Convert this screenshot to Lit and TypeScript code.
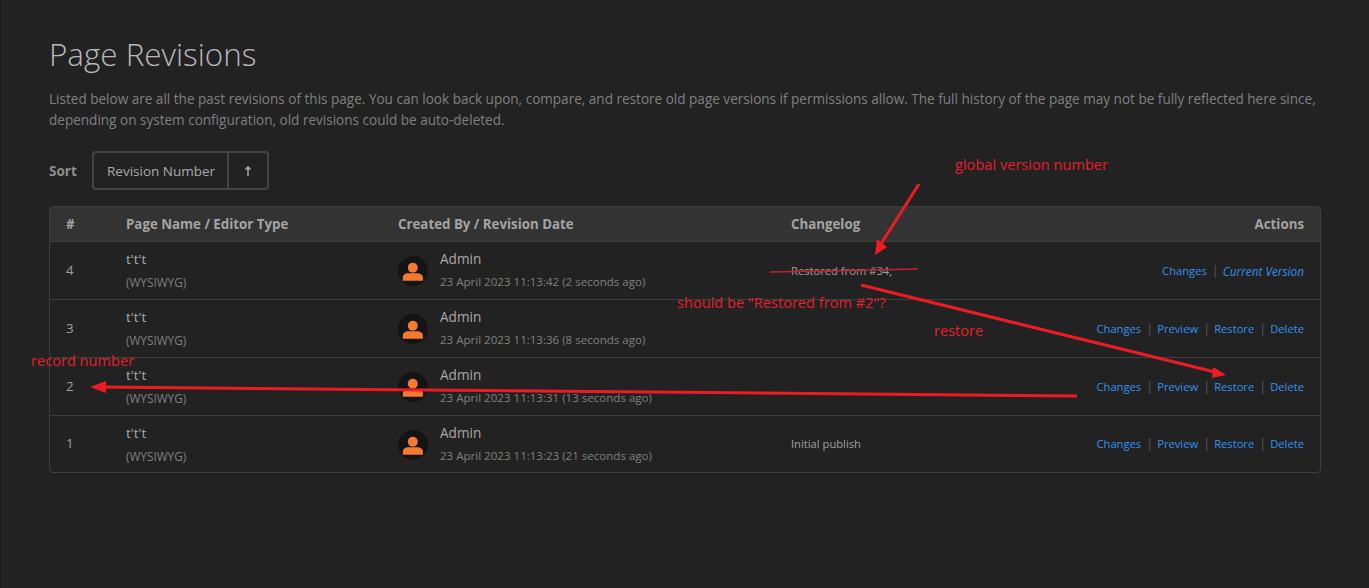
import { LitElement, html, css, svg } from "lit";
import { customElement } from "lit/decorators.js";

type Row = { n: number; date: string; log: string; current?: boolean };
const rows: Row[] = [
  { n: 4, date: "23 April 2023 11:13:42 (2 seconds ago)", log: "Restored from #34;", current: true },
  { n: 3, date: "23 April 2023 11:13:36 (8 seconds ago)", log: "" },
  { n: 2, date: "23 April 2023 11:13:31 (13 seconds ago)", log: "" },
  { n: 1, date: "23 April 2023 11:13:23 (21 seconds ago)", log: "Initial publish" },
];

@customElement("app-root")
export class AppRoot extends LitElement {
  static styles = css`
    :host {
      display: block;
      position: relative;
      width: 1369px;
      height: 588px;
      overflow: hidden;
      box-sizing: border-box;
      background: #222222;
      border-left: 1px solid #1a1a1a;
      font-family: "Open Sans", "Noto Sans", sans-serif;
      color: #a9a9a9;
    }
    .page { padding: 35px 48px 0 48px; }
    h1 {
      margin: 0;
      font-size: 31.4px;
      font-weight: 300;
      line-height: 38px;
      color: #b8b8b8;
    }
    .desc {
      margin: 16px 0 0;
      font-size: 13.55px;
      line-height: 21px;
      color: #808080;
      white-space: nowrap;
    }
    .sort { display: flex; align-items: center; margin-top: 20px; gap: 15px; }
    .sort-label { font-size: 13.5px; font-weight: 700; color: #8e8e8e; width: 28px; }
    .sort-group {
      display: flex;
      height: 39px;
      box-sizing: border-box;
      border: 2px solid #444444;
      border-radius: 4px;
      font-size: 13.5px;
      color: #a9a9a9;
    }
    .sort-field { display: flex; align-items: center; padding: 0 0 0 13px; width: 133px; box-sizing: border-box; white-space: nowrap; }
    .sort-dir {
      display: flex;
      align-items: center;
      justify-content: center;
      width: 40px;
      box-sizing: border-box;
      border-left: 2px solid #444444;
    }
    .table {
      margin-top: 16px;
      width: 1272px;
      box-sizing: border-box;
      border: 1px solid #3e3e3e;
      border-radius: 4px;
      overflow: hidden;
      font-size: 13.3px;
    }
    .row {
      display: grid;
      grid-template-columns: 60px 272px 393px 1fr;
      align-items: center;
      height: 58px;
      box-sizing: border-box;
      border-top: 1px solid #3e3e3e;
      padding: 0 16px;
    }
    .row.head {
      height: 34px;
      border-top: 0;
      background: #333333;
      font-weight: 700;
      color: #a4a4a4;
    }
    .row.last { height: 57px; }
    .last .name, .last .user { padding-top: 1px; }
    .last .log { margin-bottom: 2px; }
    .num { font-size: 13.3px; color: #a0a0a0; margin-bottom: 2px; }
    .title { display: block; font-size: 13.5px; color: #a9a9a9; line-height: 20px; }
    .sub { font-size: 11.8px; color: #808080; line-height: 22px; margin-top: 2px; display: block; }
    .user { display: flex; align-items: center; gap: 12px; }
    .avatar { width: 30px; height: 30px; flex: none; display: block; }
    .who { font-size: 13.6px; color: #a9a9a9; line-height: 20px; }
    .when { font-size: 11.55px; color: #808080; line-height: 22px; margin-top: 2px; white-space: nowrap; display: block; }
    .log { font-size: 11.2px; color: #a0a0a0; display: flex; justify-content: space-between; align-items: center; white-space: nowrap; }
    .log.th { font-size: 13.3px; color: #a4a4a4; }
    .actions { display: flex; align-items: center; gap: 5px; font-size: 11.2px; color: #3391f0; }
    .sep { color: #5a5a5a; font-size: 12.5px; width: 6px; text-align: center; }
    .cur { font-style: italic; font-size: 11.8px; }
    .overlay { position: absolute; left: -1px; top: 0; pointer-events: none; }
    .note { position: absolute; font-family: "Open Sans", sans-serif; font-size: 14.6px; color: #e4202c; white-space: nowrap; line-height: 18px; }
    .n1 { left: 954px; top: 155px; }
    .n2 { left: 676px; top: 293px; }
    .n3 { left: 933px; top: 321px; }
    .n4 { left: 30px; top: 351px; }
  `;

  private avatar() {
    return html`<svg class="avatar" viewBox="0 0 30 30" aria-hidden="true">
      <circle cx="15" cy="15" r="15" fill="#141414"></circle>
      <circle cx="14.8" cy="11.7" r="5" fill="#f47a2e"></circle>
      <path d="M4.8 24.7v-2.9c0-2.8 2.4-4.5 5.5-4.5h9c3.1 0 5.6 1.7 5.6 4.5v2.9z" fill="#f47a2e"></path>
    </svg>`;
  }

  private arrows() {
    return svg`
      <line x1="770" y1="272" x2="918" y2="269" stroke="#c3202c" stroke-width="1.5"></line>
      <line x1="919" y1="184" x2="879" y2="247" stroke="#ed1c24" stroke-width="3"></line>
      <polygon points="875,255 877,239 887,247" fill="#ed1c24"></polygon>
      <line x1="861" y1="285" x2="1215" y2="372" stroke="#ed1c24" stroke-width="3"></line>
      <polygon points="1226,375 1212,378 1213,367" fill="#ed1c24"></polygon>
      <line x1="1077" y1="396" x2="100" y2="387" stroke="#ed1c24" stroke-width="3"></line>
      <polygon points="90,387 106,381 106,393" fill="#ed1c24"></polygon>`;
  }

  render() {
    return html`
      <div class="page">
        <h1>Page Revisions</h1>
        <p class="desc">Listed below are all the past revisions of this page. You can look back upon, compare, and restore old page versions if permissions allow. The full history of the page may not be fully reflected here since,<br />depending on system configuration, old revisions could be auto-deleted.</p>
        <div class="sort">
          <span class="sort-label">Sort</span>
          <div class="sort-group">
            <div class="sort-field">Revision Number</div>
            <div class="sort-dir">
              <svg width="10" height="12" viewBox="0 0 10 12" aria-hidden="true"><path d="M5 .8 8.400 4.600H5.700V11H4.300V4.600H1.600z" fill="#a9a9a9"></path></svg>
            </div>
          </div>
        </div>
        <div class="table">
          <div class="row head">
            <div>#</div>
            <div>Page Name / Editor Type</div>
            <div>Created By / Revision Date</div>
            <div class="log th"><span>Changelog</span><span>Actions</span></div>
          </div>
          ${rows.map(
            (r, i) => html`<div class="row ${i === rows.length - 1 ? "last" : ""}">
              <div class="num">${r.n}</div>
              <div class="name"><span class="title">t't't</span><span class="sub">(WYSIWYG)</span></div>
              <div class="user">
                ${this.avatar()}
                <div><div class="who">Admin</div><span class="when">${r.date}</span></div>
              </div>
              <div class="log">
                <span>${r.log}</span>
                <div class="actions">
                  <span>Changes</span>
                  ${r.current
                    ? html`<span class="sep">|</span><span class="cur">Current Version</span>`
                    : html`<span class="sep">|</span><span>Preview</span><span class="sep">|</span><span>Restore</span><span class="sep">|</span><span>Delete</span>`}
                </div>
              </div>
            </div>`
          )}
        </div>
      </div>
      <svg class="overlay" width="1369" height="588" viewBox="0 0 1369 588" aria-hidden="true">${this.arrows()}</svg>
      <span class="note n1">global version number</span>
      <span class="note n2">should be "Restored from #2"?</span>
      <span class="note n3">restore</span>
      <span class="note n4">record number</span>
    `;
  }
}
